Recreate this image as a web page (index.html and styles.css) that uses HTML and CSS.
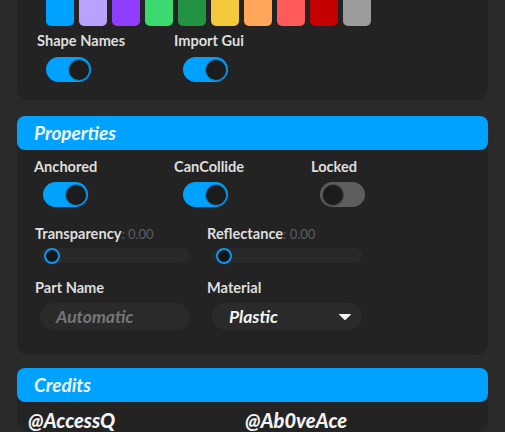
FILE: index.html
```html
<!DOCTYPE html>
<html lang="en">
<head>
    <meta charset="UTF-8">
    <title>Builder Settings</title>
    <link rel="stylesheet" href="styles.css">
</head>
<body>

    <div class="app">
        <!-- Cores / opções -->
        <div class="panel panel-top">
            <div class="swatches">
                <span class="swatch" style="background:#00a2ff"></span>
                <span class="swatch" style="background:#b9a2ff"></span>
                <span class="swatch" style="background:#8f3dff"></span>
                <span class="swatch" style="background:#3bd96e"></span>
                <span class="swatch" style="background:#239242"></span>
                <span class="swatch" style="background:#f5c93c"></span>
                <span class="swatch" style="background:#ffa65b"></span>
                <span class="swatch" style="background:#ff5b5b"></span>
                <span class="swatch" style="background:#c40000"></span>
                <span class="swatch" style="background:#9b9b9b"></span>
            </div>
            <div class="row row-options">
                <div class="cell">
                    <div class="label">Shape Names</div>
                    <div class="toggle on"><span class="knob"></span></div>
                </div>
                <div class="cell">
                    <div class="label">Import Gui</div>
                    <div class="toggle on"><span class="knob"></span></div>
                </div>
            </div>
        </div>

        <!-- Properties -->
        <div class="panel">
            <div class="header">Properties</div>
            <div class="row row-toggles">
                <div class="cell">
                    <div class="label">Anchored</div>
                    <div class="toggle on"><span class="knob"></span></div>
                </div>
                <div class="cell">
                    <div class="label">CanCollide</div>
                    <div class="toggle on"><span class="knob"></span></div>
                </div>
                <div class="cell">
                    <div class="label">Locked</div>
                    <div class="toggle"><span class="knob"></span></div>
                </div>
            </div>
            <div class="row row-fields">
                <div class="cell">
                    <div class="label">Transparency<span class="value">: 0.00</span></div>
                    <div class="slider"><span class="thumb"></span></div>
                </div>
                <div class="cell">
                    <div class="label">Reflectance<span class="value">: 0.00</span></div>
                    <div class="slider"><span class="thumb"></span></div>
                </div>
            </div>
            <div class="row row-fields last">
                <div class="cell">
                    <div class="label">Part Name</div>
                    <div class="field placeholder">Automatic</div>
                </div>
                <div class="cell">
                    <div class="label">Material</div>
                    <div class="field select">
                        <span>Plastic</span>
                        <svg width="14" height="8" viewBox="0 0 14 8"><path d="M1.5 1 H12.5 Q13.5 1 12.8 1.8 L7.7 6.8 Q7 7.4 6.3 6.8 L1.2 1.8 Q0.5 1 1.5 1 Z" fill="#f2f2f2"/></svg>
                    </div>
                </div>
            </div>
        </div>

        <!-- Credits -->
        <div class="panel">
            <div class="header">Credits</div>
            <div class="credits">
                <span class="credit">@AccessQ</span>
                <span class="credit">@Ab0veAce</span>
            </div>
        </div>
    </div>

</body>
</html>
```

FILE: styles.css
```css
/* CSS */
body {
    margin: 0;
    background-color: #2a2a2a;
    font-family: Lato, "Noto Sans", sans-serif;
    height: 432px;
    overflow: hidden;
}

.app {
    padding: 0 17px;
}

.panel {
    background-color: #232323;
    border-radius: 12px;
    margin-bottom: 13px;
}

.panel-top {
    margin-top: -20px;
    padding: 12px 0 18px;
    margin-bottom: 16px;
}

.swatches {
    display: flex;
    gap: 5px;
    padding-left: 29px;
}

.swatch {
    width: 28px;
    height: 34px;
    border-radius: 5px;
}

.row {
    display: flex;
}

.label {
    font-size: 14.6px;
    font-weight: bold;
    line-height: 16px;
    color: #dedede;
    white-space: nowrap;
}

.value {
    font-weight: normal;
    font-size: 13px;
    color: #5f5f5f;
}

/* Interruptores */
.toggle {
    position: relative;
    width: 45px;
    height: 25px;
    border-radius: 13px;
    background-color: #5e5e5e;
    margin-top: 7px;
}

.toggle .knob {
    position: absolute;
    top: 2.5px;
    left: 2.5px;
    width: 20px;
    height: 20px;
    border-radius: 50%;
    background-color: #1c1c1c;
    box-shadow: 0 0 0 1px #474747;
}

.toggle.on {
    background-color: #00a2ff;
}

.toggle.on .knob {
    left: auto;
    right: 2.5px;
    box-shadow: 0 0 0 1px #0a7fc4;
}

.row-options {
    padding: 7px 0 0 20px;
}

.row-options .cell {
    width: 137px;
}

.row-options .toggle {
    margin-left: 9px;
    margin-top: 8px;
}

/* Cabeçalho azul */
.header {
    height: 34px;
    line-height: 34px;
    background-color: #00a2ff;
    border-radius: 8px;
    padding-left: 17px;
    color: #eef7ff;
    font-size: 19px;
    font-weight: bold;
    font-style: italic;
}

.row-toggles {
    padding: 9px 0 0 17px;
}

.row-toggles .cell:nth-child(1) {
    width: 140px;
}

.row-toggles .cell:nth-child(2) {
    width: 137px;
}

.row-toggles .toggle {
    margin-left: 9px;
}

.row-fields {
    padding: 19px 0 0 18px;
}

.row-fields.last {
    padding-top: 17px;
    padding-bottom: 25px;
}

.row-fields .cell {
    width: 172px;
}

.slider {
    position: relative;
    width: 150px;
    height: 15px;
    margin: 6px 0 0 5px;
    border-radius: 8px;
    background-color: #292929;
}

.slider .thumb {
    position: absolute;
    left: 4px;
    top: -0.5px;
    width: 12px;
    height: 12px;
    border: 2px solid #0a98ee;
    border-radius: 50%;
    background-color: #151515;
}

.field {
    width: 150px;
    height: 27px;
    margin: 7px 0 0 5px;
    border-radius: 14px;
    background-color: #2a2a2a;
    box-sizing: border-box;
    padding: 0 10px 0 16px;
    display: flex;
    align-items: center;
    justify-content: space-between;
    font-size: 17.5px;
    font-weight: bold;
    font-style: italic;
}

.placeholder {
    color: #767676;
}

.select {
    color: #f4f4f4;
    padding-left: 17px;
}

/* Créditos */
.credits {
    display: flex;
    padding: 6px 0 0 11px;
}

.credit {
    width: 217px;
    font-size: 20px;
    font-weight: 900;
    font-style: italic;
    color: #f2f2f2;
}
```
